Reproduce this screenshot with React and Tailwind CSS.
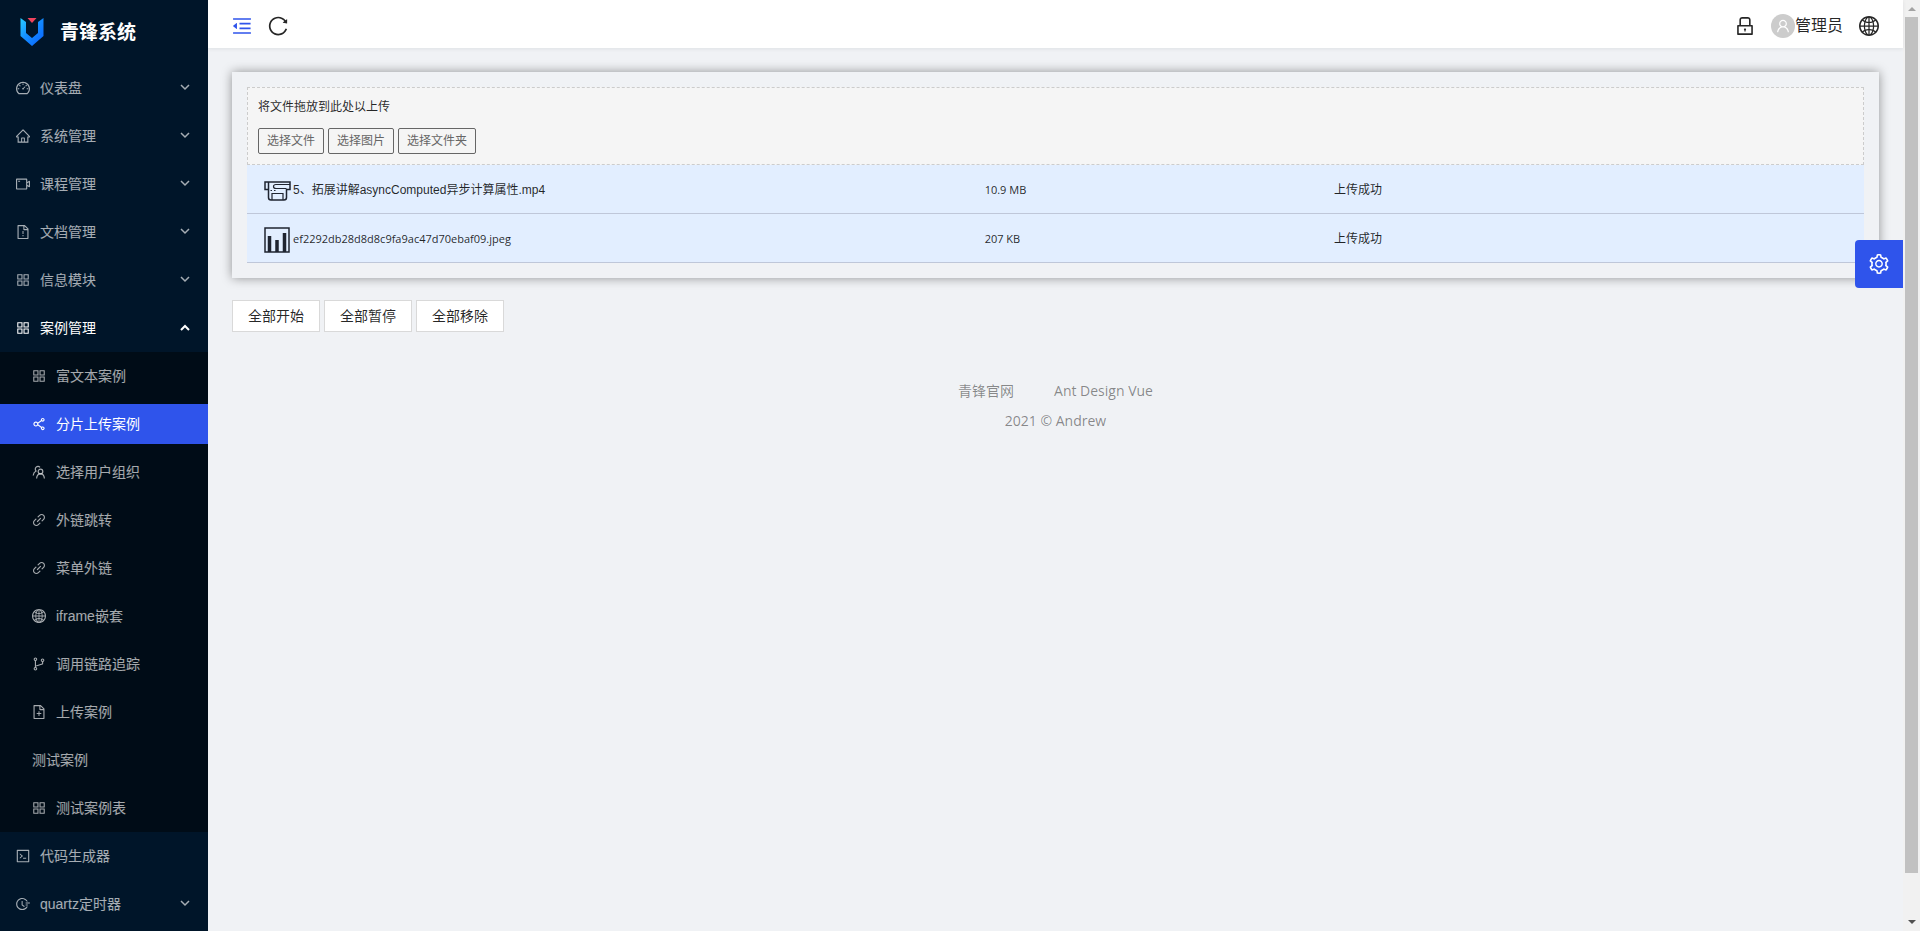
import {
  AiOutlineAppstore,
  AiOutlineBranches,
  AiOutlineCode,
  AiOutlineDashboard,
  AiOutlineFieldTime,
  AiOutlineFileAdd,
  AiOutlineFileExclamation,
  AiOutlineGlobal,
  AiOutlineHome,
  AiOutlineLink,
  AiOutlineLock,
  AiOutlineMenuFold,
  AiOutlineReload,
  AiOutlineSetting,
  AiOutlineShareAlt,
  AiOutlineUser,
  AiOutlineVideoCamera,
} from 'react-icons/ai'

/* ───────── Data ───────── */

const menu = [
  { title: '仪表盘', icon: AiOutlineDashboard, group: true },
  { title: '系统管理', icon: AiOutlineHome, group: true },
  { title: '课程管理', icon: AiOutlineVideoCamera, group: true },
  { title: '文档管理', icon: AiOutlineFileExclamation, group: true },
  { title: '信息模块', icon: AiOutlineAppstore, group: true },
  {
    title: '案例管理',
    icon: AiOutlineAppstore,
    group: true,
    children: [
      { title: '富文本案例', icon: AiOutlineAppstore },
      { title: '分片上传案例', icon: AiOutlineShareAlt, active: true },
      { title: '选择用户组织', icon: UserPairIcon },
      { title: '外链跳转', icon: AiOutlineLink },
      { title: '菜单外链', icon: AiOutlineLink },
      { title: 'iframe嵌套', icon: AiOutlineGlobal },
      { title: '调用链路追踪', icon: AiOutlineBranches },
      { title: '上传案例', icon: AiOutlineFileAdd },
      { title: '测试案例' },
      { title: '测试案例表', icon: AiOutlineAppstore },
    ],
  },
  { title: '代码生成器', icon: AiOutlineCode },
  { title: 'quartz定时器', icon: AiOutlineFieldTime, group: true },
]

const files = [
  { name: '5、拓展讲解asyncComputed异步计算属性.mp4', size: '10.9 MB', status: '上传成功', icon: VideoFileIcon },
  { name: 'ef2292db28d8d8c9fa9ac47d70ebaf09.jpeg', size: '207 KB', status: '上传成功', icon: ImageFileIcon },
]

/* ───────── Icons ───────── */

// the ant glyphs carry a 64 unit margin that the menus do not want
const GLYPH_BOX = '64 64 896 896'

function Logo() {
  return (
    <svg width="32" height="32" viewBox="0 0 32 32" aria-hidden="true">
      <defs>
        <linearGradient id="logoBlue" x1="0" y1="0" x2="1" y2="1">
          <stop offset="0%" stopColor="#29cdff" />
          <stop offset="45%" stopColor="#148eff" />
          <stop offset="100%" stopColor="#0a60ff" />
        </linearGradient>
      </defs>
      <path d="M4.5 2l5.5 4v11l6 5 6-5V6l5.5-4v18L16 30 4.5 20z" fill="url(#logoBlue)" />
      <path d="M11.5 2h9L16 7z" fill="#f0435c" />
    </svg>
  )
}

function UserPairIcon({ size }) {
  return (
    <svg width={size} height={size} viewBox="0 0 14 14" fill="none" stroke="currentColor" strokeWidth="1.2" aria-hidden="true">
      <circle cx="8.5" cy="6.5" r="2.3" />
      <path d="M4.6 13.500c.2-2.700 1.700-4.600 3.900-4.600s3.700 1.900 3.900 4.600" />
      <path d="M8 2.300A2.600 2.600 0 1 0 4 6C2.500 6.700 1.400 8.300 1.200 10.500" />
    </svg>
  )
}

function VideoFileIcon() {
  return (
    <svg width="27" height="20" viewBox="0 0 27 20" fill="none" stroke="#1f2430" strokeWidth="1.5" aria-hidden="true">
      <path d="M4.5 8.500H1V1h25v7.500h-3.500" />
      <path d="M4.5 1v15.500q0 2.500 2.500 2.500h13q2.500 0 2.500-2.500V8" />
      <path d="M26 3.500H12q-2.500 0-2.500 2t2.500 2h10.500M8 19v-6.500h11V19" strokeWidth="1.2" />
      <path d="M6.500 9.500H8M10 9.500h1.500" strokeWidth="1.2" />
    </svg>
  )
}

function ImageFileIcon() {
  return (
    <svg width="26" height="26" viewBox="0 0 26 26" fill="none" stroke="#1f2430" aria-hidden="true">
      <path d="M1 1h24v24H1z" strokeWidth="1.5" />
      <path d="M5.500 9v16M13 13v12M20.500 6v19" strokeWidth="3.5" />
    </svg>
  )
}

function Chevron({ open }) {
  return (
    <svg
      width="10"
      height="8"
      viewBox="0 0 10 8"
      fill="none"
      stroke="currentColor"
      strokeWidth={open ? 2 : 1.5}
      aria-hidden="true"
    >
      <path d={open ? 'M1 6l4-4 4 4' : 'M1 1l4 4 4-4'} />
    </svg>
  )
}

/* ───────── Sidebar ───────── */

function MenuItem({ item, nested }) {
  const Icon = item.icon
  const open = Boolean(item.children)
  const color = open || item.active ? 'text-white' : 'text-white/65'

  return (
    <li className="flow-root">
      <a
        href="#"
        className={`my-1 flex h-10 items-center gap-2.5 pr-[18px] text-sm ${nested ? 'pl-8' : 'pl-4'} ${color} ${item.active ? 'bg-[#2f54eb]' : ''}`}
      >
        {Icon && <Icon size={14} viewBox={GLYPH_BOX} />}
        <span className="flex-1">{item.title}</span>
        {item.group && <Chevron open={open} />}
      </a>
      {open && (
        <ul className="flow-root bg-[#000c17]">
          {item.children.map((child) => (
            <MenuItem key={child.title} item={child} nested />
          ))}
        </ul>
      )}
    </li>
  )
}

function Sidebar() {
  return (
    <aside className="w-52 shrink-0 overflow-hidden bg-[#001529]">
      <div className="flex h-16 items-center gap-3 pl-4">
        <Logo />
        <h1 className="pt-0.5 text-[19px] font-semibold text-white">青锋系统</h1>
      </div>
      <nav>
        <ul>
          {menu.map((item) => (
            <MenuItem key={item.title} item={item} />
          ))}
        </ul>
      </nav>
    </aside>
  )
}

/* ───────── Header ───────── */

function Header() {
  return (
    <header className="relative flex h-12 items-center justify-between bg-white px-6 pt-1 text-black/85 shadow-[0_1px_4px_rgba(0,21,41,0.08)]">
      <div className="flex items-center gap-4">
        <button type="button" aria-label="收起菜单" className="text-[#2f54eb]">
          <AiOutlineMenuFold size={20} viewBox={GLYPH_BOX} />
        </button>
        <button type="button" aria-label="刷新">
          <AiOutlineReload size={20} viewBox={GLYPH_BOX} />
        </button>
      </div>
      <div className="flex items-center gap-4">
        <button type="button" aria-label="锁屏">
          <AiOutlineLock size={20} viewBox={GLYPH_BOX} />
        </button>
        <button type="button" className="flex items-center text-base">
          <span className="flex h-6 w-6 items-center justify-center rounded-full bg-[#ccc] text-white">
            <AiOutlineUser size={14} viewBox={GLYPH_BOX} />
          </span>
          管理员
        </button>
        <button type="button" aria-label="语言">
          <AiOutlineGlobal size={20} viewBox={GLYPH_BOX} />
        </button>
      </div>
    </header>
  )
}

/* ───────── Uploader ───────── */

function DropZone() {
  return (
    <div className="border border-dashed border-[#ccc] bg-[#f5f5f5] p-2.5">
      <p className="mb-3 leading-[18px]">将文件拖放到此处以上传</p>
      <div className="flex gap-1">
        {['选择文件', '选择图片', '选择文件夹'].map((label) => (
          <button key={label} type="button" className="h-[26px] rounded-xs border border-[#666] px-2 text-[#666]">
            {label}
          </button>
        ))}
      </div>
    </div>
  )
}

// plain latin values are set in the humanist face, anything with CJK keeps the page font
function CellText({ children }) {
  const latin = /^[\w. ]+$/.test(children)
  return <span className={latin ? 'font-["Open_Sans",sans-serif] text-[11px]' : ''}>{children}</span>
}

function FileTable() {
  return (
    <table className="w-full table-fixed border-separate border-spacing-0 text-black/85">
      <colgroup>
        <col className="w-[45%]" />
        <col className="w-[21.6%]" />
        <col />
      </colgroup>
      <tbody>
        {files.map(({ name, size, status, icon: Icon }) => (
          <tr key={name} className="h-[49px] bg-[#e2eeff]">
            <td className="border-b border-[#bfc7d9] pt-0.5 pl-4">
              <div className="flex items-center gap-0.5">
                <span className="flex w-7 justify-center pt-0.5">
                  <Icon />
                </span>
                <CellText>{name}</CellText>
              </div>
            </td>
            <td className="border-b border-[#bfc7d9] pt-0.5 pl-2.5">
              <CellText>{size}</CellText>
            </td>
            <td className="border-b border-[#bfc7d9] pt-0.5 pl-2.5">
              <CellText>{status}</CellText>
            </td>
          </tr>
        ))}
      </tbody>
    </table>
  )
}

function Footer() {
  return (
    <footer className='mt-12 text-center font-["Open_Sans","Noto_Sans_CJK_SC",sans-serif] text-sm leading-[22px] text-black/45'>
      <div className="mb-2 flex justify-center gap-10">
        <a href="#">青锋官网</a>
        <a href="#">Ant Design Vue</a>
      </div>
      <p>2021 © Andrew</p>
    </footer>
  )
}

function ScrollRail() {
  return (
    <div className="flex w-[17px] shrink-0 flex-col items-center bg-[#f1f1f1]" aria-hidden="true">
      <svg width="17" height="17" viewBox="0 0 17 17" className="shrink-0">
        <path d="M5 11l4-4 4 4z" fill="#a3a3a3" />
      </svg>
      <div className="w-[13px] flex-1 bg-[#c1c1c1]" />
      <div className="h-[41px]" />
      <svg width="17" height="17" viewBox="0 0 17 17" className="shrink-0">
        <path d="M5 6l4 4 4-4z" fill="#505050" />
      </svg>
    </div>
  )
}

export default function App() {
  return (
    <div className='flex h-screen overflow-hidden bg-[#f0f2f5] font-["Liberation_Sans","Noto_Sans_CJK_SC",sans-serif]'>
      <Sidebar />
      <div className="relative min-w-0 flex-1">
        <Header />
        <main className="p-6 pb-0 text-xs text-black/85">
          <section className="p-[15px] shadow-[0_0_10px_rgba(0,0,0,0.4)]">
            <DropZone />
            <FileTable />
          </section>
          <div className="mt-[22px] flex gap-1 text-sm">
            {['全部开始', '全部暂停', '全部移除'].map((label) => (
              <button key={label} type="button" className="h-8 border border-[#d9d9d9] bg-white px-[15px]">
                {label}
              </button>
            ))}
          </div>
        </main>
        <Footer />
        <button
          type="button"
          aria-label="设置"
          className="absolute top-60 right-0 flex h-12 w-12 items-center justify-center rounded-l bg-[#2f54eb] text-white"
        >
          <AiOutlineSetting size={20} viewBox={GLYPH_BOX} />
        </button>
      </div>
      <ScrollRail />
    </div>
  )
}
